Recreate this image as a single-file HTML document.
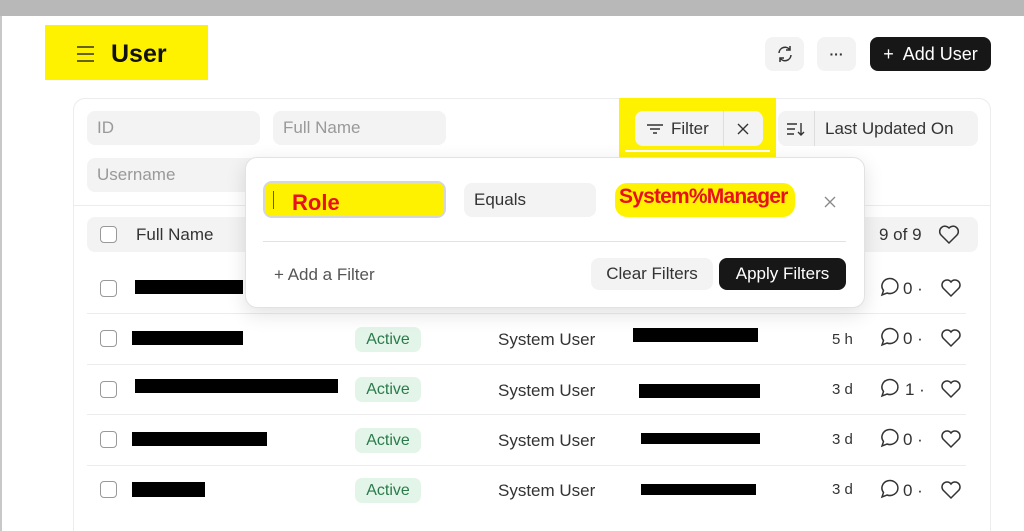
<!DOCTYPE html>
<html style="width:1024px;height:531px;overflow:hidden"><head><style>
*{box-sizing:border-box;margin:0;padding:0}
body{width:1024px;height:531px;overflow:hidden;background:#fff;font-family:"Liberation Sans",sans-serif;position:relative;color:#333}
.a{position:absolute}
.inp{position:absolute;background:#f3f3f3;border-radius:8px;color:#999;font-size:17px;padding-left:10px;display:flex;align-items:center}
.btn{position:absolute;background:#f3f3f3;border-radius:8px;display:flex;align-items:center;justify-content:center}
.blk{position:absolute;background:#000}
.cb{position:absolute;width:17px;height:17px;border:1.5px solid #999;border-radius:4px;background:#fff}
.badge{position:absolute;left:355px;width:66px;height:25px;background:#e3f5e9;color:#2b7a4b;border-radius:7px;font-size:16px;display:flex;align-items:center;justify-content:center}
.t{position:absolute;font-size:17px;color:#333}
.hr{position:absolute;left:87px;width:879px;height:1px;background:#ececec}
</style></head><body>
<div class="a" style="left:0;top:0;width:1024px;height:16px;background:#b8b8b8"></div>
<div class="a" style="left:0;top:16px;width:2px;height:515px;background:#c8c8c8"></div>
<div class="a" style="left:45px;top:25px;width:163px;height:55px;background:#fff200"></div>
<svg class="a" style="left:76px;top:45px" width="20" height="18"><path d="M1 2H18M1 9H18M1 16H18" stroke="#333" stroke-width="1.6"/></svg>
<div class="a" style="left:111px;top:40px;font-size:25px;font-weight:bold;color:#111">User</div>
<div class="btn" style="left:765px;top:37px;width:39px;height:34px"><svg width="18" height="18" viewBox="0 0 18 18" fill="none" stroke="#333" stroke-width="1.5"><path d="M3 8A6 6 0 0 1 14 5M15 10A6 6 0 0 1 4 13"/><path d="M14 1V5H10M4 17V13H8"/></svg></div>
<div class="btn" style="left:817px;top:37px;width:39px;height:34px;font-size:14px;font-weight:bold">···</div>
<div class="btn" style="left:870px;top:37px;width:121px;height:34px;background:#171717;color:#fff;font-size:18px">+&nbsp; Add User</div>
<div class="a" style="left:73px;top:98px;width:918px;height:433px;border:1px solid #ececec;border-bottom:none;border-radius:12px 12px 0 0"></div>
<div class="inp" style="left:87px;top:111px;width:173px;height:34px">ID</div>
<div class="inp" style="left:273px;top:111px;width:173px;height:34px">Full Name</div>
<div class="inp" style="left:87px;top:158px;width:173px;height:34px">Username</div>
<div class="a" style="left:619px;top:98px;width:157px;height:59px;background:#fff200"></div>
<div class="btn" style="left:635px;top:111px;width:128px;height:35px;justify-content:flex-start;font-size:17px">
<svg style="margin-left:11px" width="18" height="14"><path d="M1 3H17M4 7H14M7 11H11" stroke="#333" stroke-width="1.4"/></svg><span style="margin-left:7px">Filter</span>
<div style="position:absolute;left:88px;top:0;width:1px;height:35px;background:#ddd"></div>
<svg style="position:absolute;left:102px;top:12px" width="12" height="12"><path d="M1 1L11 11M11 1L1 11" stroke="#333" stroke-width="1.4"/></svg></div>
<div class="a" style="left:625px;top:150px;width:145px;height:2px;background:#fff"></div>
<div class="btn" style="left:778px;top:111px;width:200px;height:35px;justify-content:flex-start;font-size:17px">
<svg style="margin-left:8px" width="20" height="16"><path d="M1 3H11M1 8H9M1 13H8M15 2V14M12 11L15 14L18 11" stroke="#333" stroke-width="1.4" fill="none"/></svg>
<div style="position:absolute;left:36px;top:0;width:1px;height:35px;background:#ddd"></div>
<span style="margin-left:19px;color:#333">Last Updated On</span></div>
<div class="a" style="left:74px;top:205px;width:916px;height:1px;background:#ececec"></div>
<div class="a" style="left:87px;top:217px;width:891px;height:35px;background:#f3f3f3;border-radius:8px"></div>
<div class="cb" style="left:100px;top:226px"></div>
<div class="t" style="left:136px;top:225px">Full Name</div>
<div class="t" style="left:879px;top:225px">9 of 9</div>
<svg class="a" style="left:938px;top:225px" width="22" height="20" viewBox="0 0 22 20"><path d="M11 18L3 10A5 5 0 0 1 11 3A5 5 0 0 1 19 10Z" fill="none" stroke="#333" stroke-width="1.5"/></svg>

<div class="cb" style="left:100px;top:280px"></div>
<div class="blk" style="left:135px;top:280px;width:108px;height:14px"></div>
<div class="hr" style="top:313px"></div>
<div class="cb" style="left:100px;top:330px"></div>
<div class="blk" style="left:132px;top:331px;width:111px;height:14px"></div>
<div class="badge" style="top:327px">Active</div>
<div class="t" style="left:498px;top:330px">System User</div>
<div class="blk" style="left:633px;top:328px;width:125px;height:14px"></div>
<div class="t" style="left:832px;top:331px;font-size:15px">5 h</div>
<div class="hr" style="top:364px"></div>
<div class="cb" style="left:100px;top:381px"></div>
<div class="blk" style="left:135px;top:379px;width:203px;height:14px"></div>
<div class="badge" style="top:377px">Active</div>
<div class="t" style="left:498px;top:381px">System User</div>
<div class="blk" style="left:639px;top:384px;width:121px;height:14px"></div>
<div class="t" style="left:832px;top:381px;font-size:15px">3 d</div>
<div class="hr" style="top:414px"></div>
<div class="cb" style="left:100px;top:431px"></div>
<div class="blk" style="left:132px;top:432px;width:135px;height:14px"></div>
<div class="badge" style="top:428px">Active</div>
<div class="t" style="left:498px;top:431px">System User</div>
<div class="blk" style="left:641px;top:433px;width:119px;height:11px"></div>
<div class="t" style="left:832px;top:431px;font-size:15px">3 d</div>
<div class="hr" style="top:465px"></div>
<div class="cb" style="left:100px;top:481px"></div>
<div class="blk" style="left:132px;top:482px;width:73px;height:15px"></div>
<div class="badge" style="top:478px">Active</div>
<div class="t" style="left:498px;top:481px">System User</div>
<div class="blk" style="left:641px;top:484px;width:115px;height:11px"></div>
<div class="t" style="left:832px;top:481px;font-size:15px">3 d</div>

<svg class="a" style="left:878px;top:277px" width="90" height="240">
<g fill="none" stroke="#333" stroke-width="1.5">
<g id="c"><path d="M4 18L5.5 13.5A8 7.5 0 1 1 9 16Z"/><path d="M73 19L65 11A4.5 4.5 0 0 1 73 5A4.5 4.5 0 0 1 81 11Z"/></g>
<use href="#c" y="50"/><use href="#c" y="101"/><use href="#c" y="151"/><use href="#c" y="202"/>
</g>
<g font-family="Liberation Sans" font-size="17" fill="#333">
<text x="25" y="17">0 ·</text><text x="25" y="67">0 ·</text><text x="27" y="118">1 ·</text><text x="25" y="168">0 ·</text><text x="25" y="219">0 ·</text></g>
</svg>

<div class="a" style="left:245px;top:157px;width:620px;height:151px;background:#fff;border:1px solid #e2e2e2;border-radius:12px;box-shadow:0 6px 20px rgba(0,0,0,.12)"></div>
<div class="a" style="left:263px;top:181px;width:183px;height:37px;background:#fff200;border:2px solid #d6d6d6;border-radius:9px"></div>
<div class="a" style="left:273px;top:191px;width:1px;height:18px;background:#555"></div>
<div class="a" style="left:292px;top:190px;font-size:22px;font-weight:bold;color:#e8101e">Role</div>
<div class="inp" style="left:464px;top:183px;width:132px;height:34px;color:#333">Equals</div>
<div class="a" style="left:615px;top:183px;width:180px;height:34px;background:#fff200;border-radius:12px"></div>
<div class="a" style="left:619px;top:185px;font-size:21px;font-weight:bold;color:#e8101e;letter-spacing:-0.8px">System%Manager</div>
<svg class="a" style="left:824px;top:196px" width="12" height="12"><path d="M1 1L11 11M11 1L1 11" stroke="#888" stroke-width="1.3"/></svg>
<div class="a" style="left:263px;top:241px;width:583px;height:1px;background:#e2e2e2"></div>
<div class="t" style="left:274px;top:265px;color:#555">+ Add a Filter</div>
<div class="btn" style="left:591px;top:258px;width:122px;height:32px;font-size:17px;color:#333">Clear Filters</div>
<div class="btn" style="left:719px;top:258px;width:127px;height:32px;background:#171717;color:#fff;font-size:17px">Apply Filters</div>
</body></html>
